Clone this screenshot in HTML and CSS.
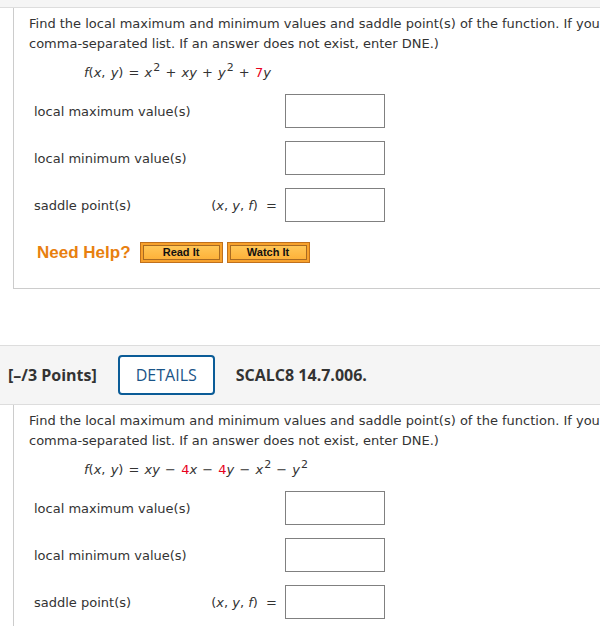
FILE: index.html
```html
<!DOCTYPE html>
<html>
<head>
<meta charset="utf-8">
<link rel="stylesheet" href="styles.css">
</head>
<body>
<div class="page">
  <div class="top-band"></div>

  <div class="question">
    <div class="prompt">Find the local maximum and minimum values and saddle point(s) of the function. If you have three-dimensional graphing software, graph the function with a domain and viewpoint that reveal all the important aspects of the function. (Enter your answers as a</div>
    <div class="prompt">comma-separated list. If an answer does not exist, enter DNE.)</div>
    <div class="formula"><i>f</i>(<i>x</i>, <i>y</i>) = <i>x</i><sup>2</sup> + <i>xy</i> + <i>y</i><sup>2</sup> + <span class="red">7</span><i>y</i></div>
    <div class="answers">
      <div class="label">local maximum value(s)</div><div class="mid"></div><div class="box"></div>
      <div class="label">local minimum value(s)</div><div class="mid"></div><div class="box"></div>
      <div class="label">saddle point(s)</div><div class="mid">(<i>x</i>, <i>y</i>, <i>f</i>) &nbsp;=</div><div class="box"></div>
    </div>
    <div class="help">
      <span class="help-text">Need Help?</span>
      <span class="obtn"><span class="obtn-inner">Read It</span></span>
      <span class="obtn"><span class="obtn-inner">Watch It</span></span>
    </div>
  </div>

  <div class="gap"></div>

  <div class="qheader">
    <span class="points">[–/3 Points]</span>
    <span class="details">DETAILS</span>
    <span class="code">SCALC8 14.7.006.</span>
  </div>

  <div class="question second">
    <div class="prompt">Find the local maximum and minimum values and saddle point(s) of the function. If you have three-dimensional graphing software, graph the function with a domain and viewpoint that reveal all the important aspects of the function. (Enter your answers as a</div>
    <div class="prompt">comma-separated list. If an answer does not exist, enter DNE.)</div>
    <div class="formula"><i>f</i>(<i>x</i>, <i>y</i>) = <i>xy</i> − <span class="red">4</span><i>x</i> − <span class="red">4</span><i>y</i> − <i>x</i><sup>2</sup> − <i>y</i><sup>2</sup></div>
    <div class="answers">
      <div class="label">local maximum value(s)</div><div class="mid"></div><div class="box"></div>
      <div class="label">local minimum value(s)</div><div class="mid"></div><div class="box"></div>
      <div class="label">saddle point(s)</div><div class="mid">(<i>x</i>, <i>y</i>, <i>f</i>) &nbsp;=</div><div class="box"></div>
    </div>
  </div>
</div>
</body>
</html>
```

FILE: styles.css
```css
html, body {
  margin: 0;
  padding: 0;
  background: #fff;
  overflow: hidden;
}
.page {
  width: 600px;
  height: 626px;
  overflow: hidden;
  font-family: "DejaVu Sans", Verdana, sans-serif;
  color: #333;
}
.top-band {
  height: 7px;
  background: #f5f5f5;
  border-bottom: 1px solid #dddddd;
}
.question {
  margin-left: 13px;
  border-left: 1px solid #cccccc;
  border-bottom: 1px solid #cccccc;
  padding: 6px 0 25px 15px;
  width: 900px;
}
.question.second {
  padding-bottom: 60px;
}
.prompt {
  font-size: 13px;
  line-height: 20px;
  white-space: nowrap;
}
.formula {
  margin: 9px 0 0 55px;
  font-size: 13px;
  line-height: 20px;
  white-space: nowrap;
  word-spacing: 1px;
}
.formula i, .mid i {
  font-style: italic;
}
.formula sup {
  font-size: 11px;
  line-height: 0;
  vertical-align: 6px;
  margin-left: 1px;
}
.red {
  color: #e8001c;
}
.answers {
  margin: 11px 0 0 5px;
  display: grid;
  grid-template-columns: 176px 75px 100px;
  grid-auto-rows: 34px;
  row-gap: 13px;
  align-items: center;
  font-size: 13px;
  line-height: 20px;
}
.label {
  padding-top: 2px;
  white-space: nowrap;
}
.mid {
  text-align: right;
  padding-right: 8px;
  padding-top: 2px;
  white-space: nowrap;
}
.box {
  height: 34px;
  box-sizing: border-box;
  border: 1px solid #808080;
  background: #fff;
}
.help {
  margin: 20px 0 0 8px;
  display: flex;
  align-items: center;
  height: 21px;
}
.help-text {
  font-family: "Liberation Sans", Arial, sans-serif;
  font-weight: bold;
  font-size: 17px;
  color: #e8800f;
  margin-right: 9px;
}
.obtn {
  display: inline-block;
  box-sizing: border-box;
  width: 83px;
  height: 21px;
  border: 1px solid #c0701c;
  background: #f7a12c;
  padding: 2px;
  margin-right: 4px;
}
.obtn-inner {
  display: block;
  height: 15px;
  box-sizing: border-box;
  border: 1px solid #a86a22;
  background: linear-gradient(#ffc657, #fdb23a);
  font-family: "Liberation Sans", Arial, sans-serif;
  font-weight: bold;
  font-size: 11px;
  line-height: 13px;
  color: #111;
  text-align: center;
}
.gap {
  height: 56px;
}
.qheader {
  background: #f5f5f5;
  border-top: 1px solid #dddddd;
  border-bottom: 1px solid #dddddd;
  padding: 9px 0 9px 8px;
  display: flex;
  align-items: center;
  font-family: "Open Sans", sans-serif;
  font-size: 16px;
  color: #333;
}
.points {
  font-weight: 700;
  margin-right: 21px;
}
.details {
  box-sizing: border-box;
  height: 40px;
  width: 97px;
  border: 2px solid #0b5c97;
  border-radius: 4px;
  color: #1a5488;
  display: flex;
  align-items: center;
  justify-content: center;
  background: #fff;
  margin-right: 21px;
}
.code {
  font-weight: 700;
}
```
